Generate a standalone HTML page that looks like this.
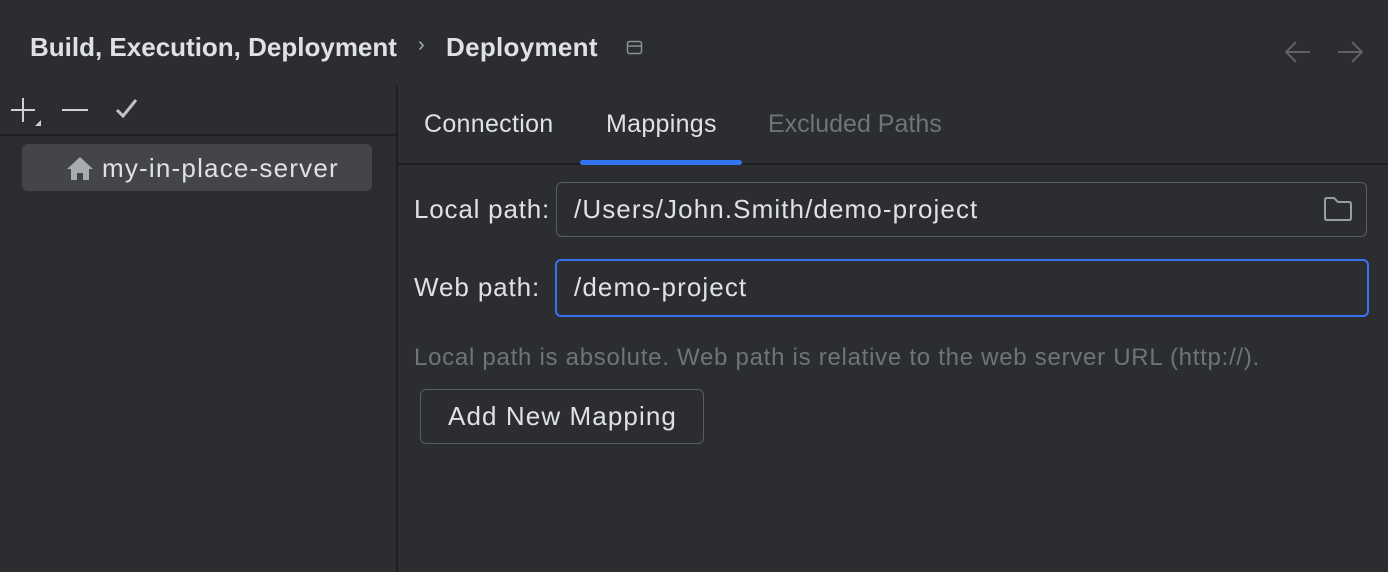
<!DOCTYPE html>
<html><head><style>
body{margin:0;width:1388px;height:572px;background:#2b2d30;font-family:"Liberation Sans",sans-serif;color:#dfe1e5;position:relative;overflow:hidden}
.a{position:absolute}
.t{font-size:25px;white-space:nowrap;letter-spacing:0.3px}
.b{font-size:26px;white-space:nowrap;letter-spacing:1px}
</style></head><body>
<div class="a b" style="left:30px;top:32px;font-weight:bold;letter-spacing:0">Build, Execution, Deployment</div>
<div class="a" style="left:418px;top:34px;color:#b0b3b8;font-size:20px">›</div>
<div class="a b" style="left:446px;top:32px;font-weight:bold;letter-spacing:0.3px">Deployment</div>
<svg class="a" style="left:626px;top:40px" width="18" height="16"><rect x="1.5" y="1.5" width="14" height="12" rx="2" fill="none" stroke="#8c8f94" stroke-width="1.5"/><line x1="2" y1="6" x2="15" y2="6" stroke="#8c8f94" stroke-width="1.5"/></svg>
<svg class="a" style="left:1284px;top:40px" width="90" height="24" fill="none" stroke="#5f6166" stroke-width="2"><path d="M2 12H26M12 2L2 12L12 22"/><path d="M54 12H78M68 2L78 12L68 22"/></svg>
<svg class="a" style="left:8px;top:96px" width="140" height="32" fill="none" stroke="#ced0d6" stroke-width="2"><path d="M15 2V26M3 14H27"/><path d="M33 24L33 30L27 30Z" fill="#ced0d6" stroke="none"/><path d="M54 14H80"/><path d="M109 14L115 20L128 4" stroke="#c0c2c6" stroke-width="3"/></svg>
<div class="a" style="left:0;top:134px;width:397px;height:2px;background:#1e1f22"></div>
<div class="a" style="left:396px;top:86px;width:2px;height:486px;background:#1e1f22"></div>
<div class="a" style="left:22px;top:144px;width:350px;height:47px;background:#43454a;border-radius:6px"></div>
<svg class="a" style="left:66px;top:156px" width="28" height="24"><path d="M14 1L1 13H5V24H11V17H17V24H23V13H27Z" fill="#a8abb0"/></svg>
<div class="a b" style="left:102px;top:153px;letter-spacing:1.2px">my-in-place-server</div>
<div class="a t" style="left:424px;top:110px">Connection</div>
<div class="a t" style="left:606px;top:110px">Mappings</div>
<div class="a t" style="left:768px;top:110px;color:#6f737a;letter-spacing:0">Excluded Paths</div>
<div class="a" style="left:398px;top:163px;width:990px;height:2px;background:#1e1f22"></div>
<div class="a" style="left:580px;top:160px;width:162px;height:5px;background:#3574f0;border-radius:3px"></div>
<div class="a b" style="left:414px;top:194px;letter-spacing:0.8px">Local path:</div>
<div class="a" style="left:556px;top:182px;width:809px;height:53px;border:1px solid #5a5d63;border-radius:6px"></div>
<div class="a b" style="left:574px;top:194px;letter-spacing:1.1px">/Users/John.Smith/demo-project</div>
<svg class="a" style="left:1323px;top:196px" width="30" height="26" fill="none" stroke="#9a9da2" stroke-width="2"><path d="M2 4Q2 2 4 2H11L15 6H26Q28 6 28 8V22Q28 24 26 24H4Q2 24 2 22Z"/></svg>
<div class="a b" style="left:414px;top:272px;letter-spacing:0.9px">Web path:</div>
<div class="a" style="left:555px;top:259px;width:810px;height:54px;border:2px solid #3574f0;border-radius:6px"></div>
<div class="a b" style="left:574px;top:272px;letter-spacing:1.1px">/demo-project</div>
<div class="a" style="left:414px;top:344px;font-size:24px;color:#6f737a;white-space:nowrap;letter-spacing:0.73px">Local path is absolute. Web path is relative to the web server URL (http://).</div>
<div class="a" style="left:420px;top:389px;width:282px;height:53px;border:1px solid #5a5d63;border-radius:6px"></div>
<div class="a b" style="left:448px;top:401px;letter-spacing:1.1px">Add New Mapping</div>
</body></html>
